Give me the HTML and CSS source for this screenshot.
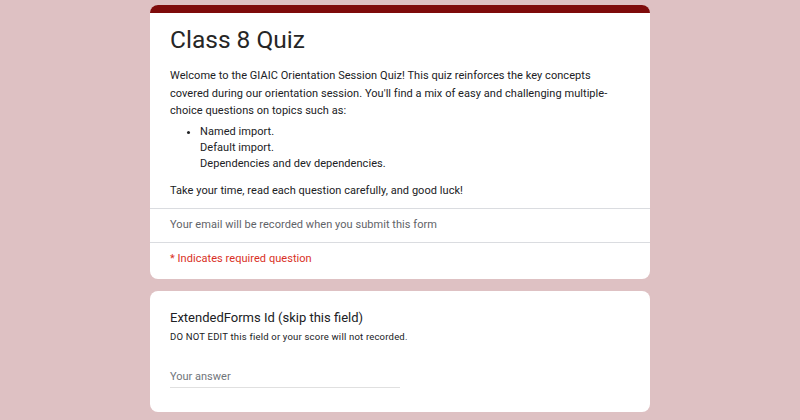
FILE: index.html
```html
<!DOCTYPE html>
<html lang="en">
<head>
  <meta charset="UTF-8">
  <title>Class 8 Quiz</title>
  <link rel="stylesheet" href="styles.css">
</head>
<body>

  <div class="form">

    <div class="card card-head">
      <div class="band"></div>

      <div class="intro">
        <h1 class="title">Class 8 Quiz</h1>
        <p class="desc">Welcome to the GIAIC Orientation Session Quiz! This quiz reinforces the key concepts covered during our orientation session. You'll find a mix of easy and challenging multiple-choice questions on topics such as:</p>
        <ul class="topics">
          <li>Named import.<br>Default import.<br>Dependencies and dev dependencies.</li>
        </ul>
        <p class="desc">Take your time, read each question carefully, and good luck!</p>
      </div>

      <div class="row row-email">Your email will be recorded when you submit this form</div>
      <div class="row row-required">* Indicates required question</div>
    </div>

    <div class="card card-question">
      <div class="q-title">ExtendedForms Id (skip this field)</div>
      <div class="q-help">DO NOT EDIT this field or your score will not recorded.</div>
      <div class="answer">Your answer</div>
    </div>

  </div>

</body>
</html>
```

FILE: styles.css
```css
html, body {
  margin: 0;
  height: 100%;
}

body {
  background: #dec1c3;
  font-family: Roboto, "Liberation Sans", sans-serif;
  color: #202124;
}

.form {
  width: 500px;
  margin: 0 auto;
  padding-top: 5px;
}

.card {
  background: #fff;
  border-radius: 8px;
  overflow: hidden;
  margin-bottom: 12px;
}

.band {
  height: 8px;
  background: #7e0b0b;
}

.intro {
  padding: 9px 20px 8.5px;
}

.title {
  margin: 0 0 9px;
  font-size: 24.5px;
  font-weight: 400;
  line-height: 36px;
  color: #262626;
}

.desc {
  margin: 0;
  font-size: 11px;
  line-height: 17.5px;
  letter-spacing: 0.05px;
}

.topics {
  margin: 4.5px 0 10px;
  padding-left: 30px;
  font-size: 11px;
  line-height: 16px;
  letter-spacing: 0.05px;
}

.row {
  border-top: 1px solid #dadce0;
  padding: 8px 20px 9px;
  font-size: 11px;
  line-height: 16px;
  letter-spacing: 0.05px;
}

.row-email {
  color: #5f6368;
}

.row-required {
  color: #d93025;
  padding-bottom: 12px;
}

.card-question {
  padding: 17px 20px 24px;
}

.q-title {
  font-size: 13px;
  line-height: 20px;
}

.q-help {
  margin-top: 2px;
  font-size: 9.5px;
  line-height: 14px;
  letter-spacing: 0.2px;
}

.answer {
  width: 230px;
  margin-top: 24px;
  padding-bottom: 1px;
  border-bottom: 1px solid #e0e0e0;
  font-size: 11px;
  line-height: 18px;
  color: #70757a;
}
```
